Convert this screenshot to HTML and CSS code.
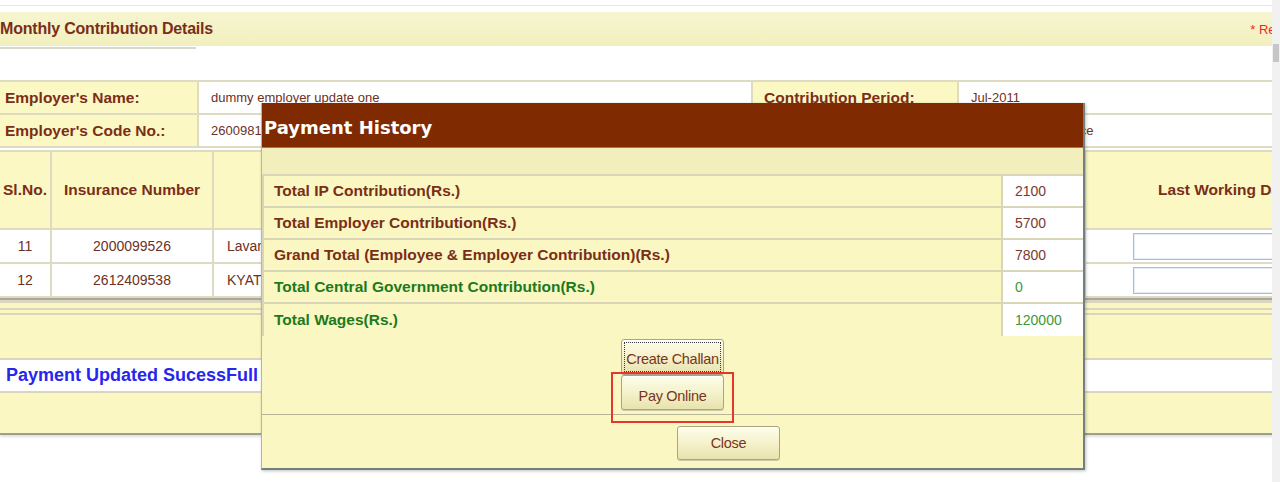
FILE: index.html
```html
<!DOCTYPE html>
<html>
<head>
<meta charset="utf-8">
<title>Monthly Contribution Details</title>
<link rel="stylesheet" href="styles.css">
</head>
<body>
<div class="page">
  <div class="viewport">
    <div class="content">
      <div class="topline"></div>
      <div class="headband">
        <span class="htitle">Monthly Contribution Details</span>
        <span class="req">* Required Fields</span>
      </div>
      <div class="hunder"></div>

      <div class="emp">
        <div class="lbl">Employer's Name:</div>
        <div class="val">dummy employer update one</div>
        <div class="lbl lbl2">Contribution Period:</div>
        <div class="val">Jul-2011</div>
        <div class="lbl">Employer's Code No.:</div>
        <div class="val">26009812340001000102</div>
        <div class="lbl lbl2">Employer's Address:</div>
        <div class="val">ESIC Regional Office</div>
      </div>

      <div class="ip">
        <div class="th">Sl.No.</div>
        <div class="th">Insurance Number</div>
        <div class="th">IP Name</div>
        <div class="th th-last">Last Working Date</div>

        <div class="td c">11</div>
        <div class="td c">2000099526</div>
        <div class="td name">Lavanya</div>
        <div class="td inp"><div class="box"></div></div>

        <div class="td c">12</div>
        <div class="td c">2612409538</div>
        <div class="td name">KYATHAIAH</div>
        <div class="td inp"><div class="box"></div></div>
      </div>

      <div class="foot">
        <div class="fr r0"></div>
        <div class="fr r1"></div>
        <div class="fr r2"></div>
        <div class="fr msg">Payment Updated SucessFull</div>
        <div class="fr r4"></div>
      </div>
    </div>
  </div>
  <div class="scrollbar"><div class="thumb"></div></div>

  <div class="modal">
    <div class="mh">Payment History</div>
    <div class="msub"></div>
    <div class="mt">
      <div class="ml">Total IP Contribution(Rs.)</div><div class="mv">2100</div>
      <div class="ml">Total Employer Contribution(Rs.)</div><div class="mv">5700</div>
      <div class="ml">Grand Total (Employee &amp; Employer Contribution)(Rs.)</div><div class="mv">7800</div>
      <div class="ml green">Total Central Government Contribution(Rs.)</div><div class="mv green2">0</div>
      <div class="ml green last">Total Wages(Rs.)</div><div class="mv green2 last">120000</div>
    </div>
    <div class="btns">
      <button class="btn focus">Create Challan</button>
      <button class="btn">Pay Online</button>
    </div>
    <div class="mfoot">
      <button class="btn close">Close</button>
    </div>
  </div>
  <div class="annot"></div>
</div>
</body>
</html>
```

FILE: styles.css
```css
* { box-sizing: border-box; }

html, body {
  margin: 0;
  padding: 0;
  background: #ffffff;
  font-family: "Liberation Sans", Arial, sans-serif;
  overflow: hidden;
}

.page {
  position: relative;
  display: flex;
  width: 1280px;
  height: 482px;
}

.viewport {
  width: 1272px;
  height: 482px;
  overflow: hidden;
}

.content {
  width: 1366px;
}

.topline {
  height: 6px;
  border-bottom: 1px solid #e6e6e6;
  margin-bottom: 6px;
}

.headband {
  height: 34px;
  background: linear-gradient(#f7f5d0, #f2efbe);
  display: flex;
  align-items: center;
  justify-content: space-between;
  padding-right: 16px;
}

.htitle {
  font-weight: bold;
  font-size: 16px;
  color: #7a2e18;
  letter-spacing: -0.2px;
}

.req {
  color: #f02a1e;
  font-size: 13px;
  white-space: nowrap;
}

.hunder {
  width: 196px;
  height: 2px;
  margin-top: 1px;
  background: #d9d7c8;
  margin-bottom: 31px;
}

.emp {
  display: grid;
  grid-template-columns: 197px 552px 204px 1fr;
  grid-auto-rows: 31px;
  gap: 2px;
  padding: 2px 0;
  background: #dedbc3;
}

.lbl {
  background: #fbf8c4;
  color: #7a2e18;
  font-weight: bold;
  font-size: 15.5px;
  display: flex;
  align-items: center;
  padding-left: 5px;
  white-space: nowrap;
}

.lbl2 { padding-left: 11px; }

.val {
  background: #ffffff;
  color: #6e3024;
  font-size: 13px;
  display: flex;
  align-items: center;
  padding-left: 12px;
  white-space: nowrap;
}

.ip {
  margin-top: 2px;
  display: grid;
  grid-template-columns: 50px 160px 870px 1fr;
  grid-template-rows: 76px 32px 32px;
  gap: 2px;
  padding: 2px 0;
  background: #dedbc3;
  border-bottom: 2px solid #a9a799;
}

.th {
  background: #fbf8c4;
  color: #7a2e18;
  font-weight: bold;
  font-size: 15.5px;
  display: flex;
  align-items: center;
  justify-content: center;
  white-space: nowrap;
}

.td {
  background: #ffffff;
  color: #6e3024;
  font-size: 14px;
  display: flex;
  align-items: center;
  white-space: nowrap;
}

.td.c { justify-content: center; }
.td.name { padding-left: 13px; }
.td.inp { padding-left: 47px; }

.box {
  width: 220px;
  height: 27px;
  border: 1px solid #a9bdd6;
  box-shadow: inset 0 0 0 1px #e4ecf6;
  background: #ffffff;
}

.foot {
  display: grid;
  grid-template-rows: 5px 3px 43px 31px 40px;
  gap: 2px;
  padding-top: 3px;
  background: #d9d6bd;
  border-bottom: 2px solid #9e9d91;
  box-shadow: 0 2px 2px rgba(0, 0, 0, 0.12);
}

.fr { background: #faf7c2; }

.fr.msg {
  background: #ffffff;
  color: #2626ee;
  font-weight: bold;
  font-size: 18px;
  display: flex;
  align-items: center;
  padding-left: 6px;
  white-space: nowrap;
}

.scrollbar {
  width: 8px;
  height: 482px;
  background: #f1f1f1;
}

.thumb {
  margin-top: 44px;
  margin-left: 1px;
  width: 6px;
  height: 18px;
  background: #c6c6c6;
}

/* Modal */
.modal {
  position: absolute;
  left: 261px;
  top: 103px;
  width: 824px;
  height: 367px;
  background: #faf7c2;
  border-left: 1px solid #b7b6a2;
  border-right: 2px solid #74807f;
  border-bottom: 2px solid #74807f;
  box-shadow: 1px 1px 3px rgba(0, 0, 0, 0.25);
  display: flex;
  flex-direction: column;
}

.mh {
  height: 45px;
  background: #7f2a00;
  border-bottom: 1px solid #b27050;
  color: #ffffff;
  font-family: "DejaVu Sans", Verdana, sans-serif;
  font-weight: bold;
  font-size: 18px;
  display: flex;
  align-items: center;
  padding-left: 2px;
  padding-top: 4px;
  white-space: nowrap;
}

.msub {
  height: 26px;
  background: #f2efbd;
}

.mt {
  display: grid;
  grid-template-columns: 1fr 80px;
  grid-template-rows: 30px 30px 30px 30px 32px;
  gap: 2px;
  padding: 2px 0 0 2px;
  background: #d9d6b8;
}

.ml {
  background: #faf7c2;
  color: #7a2e18;
  font-weight: bold;
  font-size: 15.5px;
  display: flex;
  align-items: center;
  padding-left: 10px;
  white-space: nowrap;
}

.mv {
  background: #ffffff;
  color: #7a3a30;
  font-size: 14px;
  display: flex;
  align-items: center;
  padding-left: 12px;
}

.ml.green { color: #1c7a1c; }
.mv.green2 { color: #3b973b; }

.btns {
  display: flex;
  flex-direction: column;
  align-items: center;
  padding-top: 3px;
  height: 79px;
  border-bottom: 1px solid #b8b496;
}

.btn {
  width: 103px;
  height: 35px;
  margin: 0;
  padding: 0;
  font-family: "Liberation Sans", Arial, sans-serif;
  font-size: 14.5px;
  color: #7a3520;
  background: linear-gradient(#fdfdea 0%, #f6f3cf 45%, #e7e3ad 100%);
  border: 1px solid #aaa57e;
  border-radius: 3px;
  box-shadow: inset 0 1px 0 #ffffff, 0 1px 0 #cfcba8;
  letter-spacing: -0.3px;
}

.btn.focus {
  height: 36px;
  outline: 1px dotted #3a3a3a;
  outline-offset: -4px;
  padding-top: 4px;
}

.btn + .btn { padding-top: 6px; }

.mfoot {
  display: flex;
  justify-content: center;
  padding-top: 11px;
  padding-left: 112px;
}

.btn.close {
  height: 34px;
}

.annot {
  position: absolute;
  left: 611px;
  top: 372px;
  width: 123px;
  height: 51px;
  border: 2px solid #e6372f;
}
```
